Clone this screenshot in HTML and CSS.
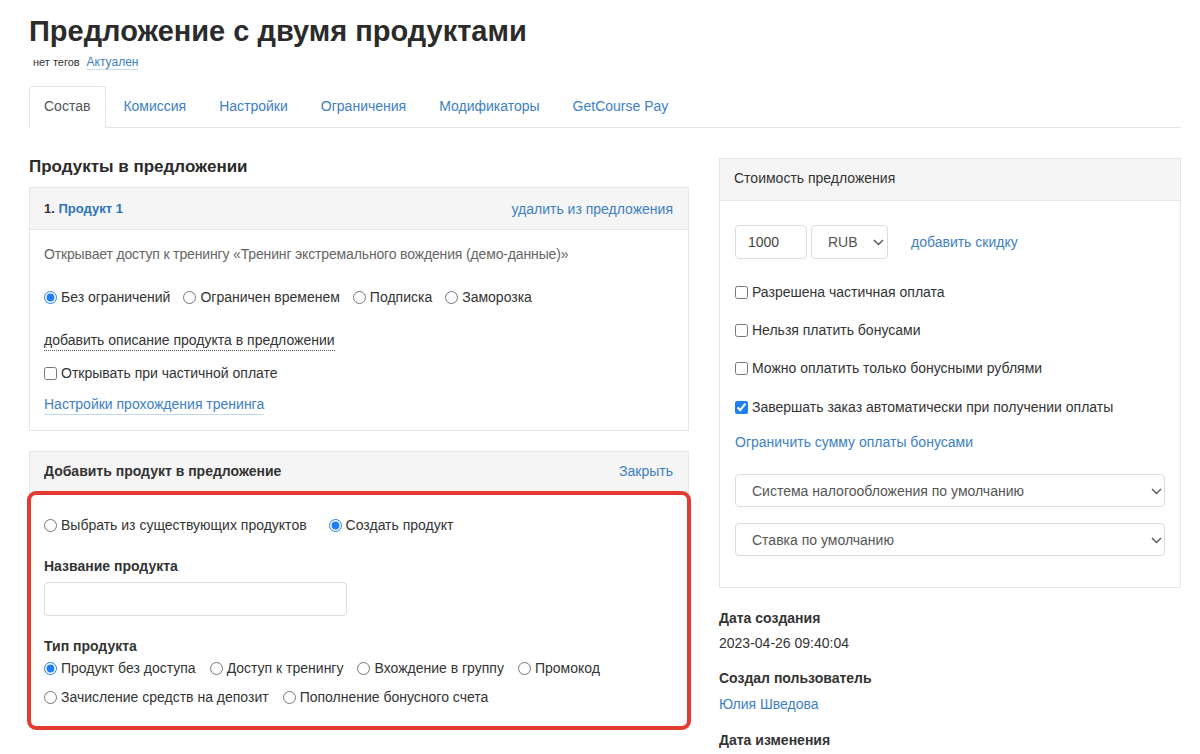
FILE: index.html
```html
<!DOCTYPE html>
<html lang="ru">
<head>
    <meta charset="UTF-8">
    <title>Предложение с двумя продуктами</title>
    <link rel="stylesheet" href="styles.css">
</head>
<body>
    <div class="page">
        <h1 class="title">Предложение с двумя продуктами</h1>
        <div class="meta">
            <span class="tags">нет тегов</span>
            <a href="#" class="status">Актуален</a>
        </div>

        <!-- Tabs -->
        <ul class="tabs">
            <li class="tab active">Состав</li>
            <li class="tab"><a href="#">Комиссия</a></li>
            <li class="tab"><a href="#">Настройки</a></li>
            <li class="tab"><a href="#">Ограничения</a></li>
            <li class="tab"><a href="#">Модификаторы</a></li>
            <li class="tab"><a href="#">GetCourse Pay</a></li>
        </ul>

        <div class="layout">
            <!-- Products -->
            <div class="main">
                <h3 class="section-title">Продукты в предложении</h3>

                <div class="panel">
                    <div class="panel-head">
                        <span class="product-name">1. <a href="#">Продукт 1</a></span>
                        <a href="#" class="link">удалить из предложения</a>
                    </div>
                    <div class="panel-body product-body">
                        <p class="muted">Открывает доступ к тренингу «Тренинг экстремального вождения (демо-данные)»</p>
                        <div class="radio-row">
                            <label class="opt"><input type="radio" name="limit" checked> Без ограничений</label>
                            <label class="opt"><input type="radio" name="limit"> Ограничен временем</label>
                            <label class="opt"><input type="radio" name="limit"> Подписка</label>
                            <label class="opt"><input type="radio" name="limit"> Заморозка</label>
                        </div>
                        <div><a href="#" class="dotted">добавить описание продукта в предложении</a></div>
                        <label class="check first-check"><input type="checkbox"> Открывать при частичной оплате</label>
                        <div><a href="#" class="underlined">Настройки прохождения тренинга</a></div>
                    </div>
                </div>

                <div class="panel">
                    <div class="panel-head raised">
                        <span class="head-title">Добавить продукт в предложение</span>
                        <a href="#" class="link">Закрыть</a>
                    </div>
                    <div class="panel-body add-body">
                        <div class="radio-row wide">
                            <label class="opt"><input type="radio" name="mode"> Выбрать из существующих продуктов</label>
                            <label class="opt"><input type="radio" name="mode" checked> Создать продукт</label>
                        </div>
                        <div class="field-label name-label">Название продукта</div>
                        <input type="text" class="text-input name-input">
                        <div class="field-label type-label">Тип продукта</div>
                        <div class="radio-row type-row">
                            <label class="opt"><input type="radio" name="type" checked> Продукт без доступа</label>
                            <label class="opt"><input type="radio" name="type"> Доступ к тренингу</label>
                            <label class="opt"><input type="radio" name="type"> Вхождение в группу</label>
                            <label class="opt"><input type="radio" name="type"> Промокод</label>
                        </div>
                        <div class="radio-row type-row second">
                            <label class="opt"><input type="radio" name="type"> Зачисление средств на депозит</label>
                            <label class="opt"><input type="radio" name="type"> Пополнение бонусного счета</label>
                        </div>
                    </div>
                </div>
            </div>

            <!-- Price -->
            <aside class="side">
                <div class="panel">
                    <div class="panel-head raised">Стоимость предложения</div>
                    <div class="panel-body price-body">
                        <div class="price-row">
                            <input type="text" class="text-input price-input" value="1000">
                            <div class="select-wrap currency">
                                <select class="select"><option>RUB</option></select>
                                <svg class="chevron" width="11" height="7" viewBox="0 0 11 7"><polyline points="1,1 5.5,5.5 10,1" fill="none" stroke="#555" stroke-width="1.4"/></svg>
                            </div>
                            <a href="#" class="link discount">добавить скидку</a>
                        </div>
                        <label class="check price-check"><input type="checkbox"> Разрешена частичная оплата</label>
                        <label class="check price-check"><input type="checkbox"> Нельзя платить бонусами</label>
                        <label class="check price-check"><input type="checkbox"> Можно оплатить только бонусными рублями</label>
                        <label class="check price-check"><input type="checkbox" checked> Завершать заказ автоматически при получении оплаты</label>
                        <div class="bonus-limit"><a href="#" class="link">Ограничить сумму оплаты бонусами</a></div>
                        <div class="select-wrap full tax">
                            <select class="select"><option>Система налогообложения по умолчанию</option></select>
                            <svg class="chevron" width="11" height="7" viewBox="0 0 11 7"><polyline points="1,1 5.5,5.5 10,1" fill="none" stroke="#555" stroke-width="1.4"/></svg>
                        </div>
                        <div class="select-wrap full rate">
                            <select class="select"><option>Ставка по умолчанию</option></select>
                            <svg class="chevron" width="11" height="7" viewBox="0 0 11 7"><polyline points="1,1 5.5,5.5 10,1" fill="none" stroke="#555" stroke-width="1.4"/></svg>
                        </div>
                    </div>
                </div>

                <div class="info">
                    <div class="info-label">Дата создания</div>
                    <div class="info-value">2023-04-26 09:40:04</div>
                    <div class="info-label">Создал пользователь</div>
                    <div class="info-value user"><a href="#" class="link">Юлия Шведова</a></div>
                    <div class="info-label last">Дата изменения</div>
                </div>
            </aside>
        </div>
    </div>
</body>
</html>
```

FILE: styles.css
```css
/* General */
body {
    margin: 0;
    font-family: 'Liberation Sans', Arial, sans-serif;
    font-size: 14px;
    color: #333;
    background: #fff;
}

a {
    color: #3d80c3;
    text-decoration: none;
}

.page {
    padding: 0 19px 0 29px;
}

.title {
    margin: 14px 0 0;
    font-size: 29px;
    line-height: 34px;
    font-weight: bold;
    color: #2b2b2b;
}

.meta {
    margin-top: 5px;
    margin-left: 4px;
    line-height: 16px;
}

.tags {
    font-size: 11px;
    color: #333;
    margin-right: 3px;
}

.status {
    font-size: 12px;
    border-bottom: 1px solid #c9dcef;
}

/* Tabs */
.tabs {
    list-style: none;
    margin: 16px 0 0;
    padding: 0;
    display: flex;
    border-bottom: 1px solid #e4e4e4;
}

.tab {
    padding: 9px 15px 11px 16px;
    line-height: 20px;
    border: 1px solid transparent;
    border-radius: 4px 4px 0 0;
    margin-bottom: -1px;
}

.tab.active {
    padding: 9px 15px 11px 14px;
    color: #555;
    border-color: #e4e4e4;
    border-bottom-color: #fff;
    background: #fff;
}

.layout {
    display: flex;
    gap: 30px;
    margin-top: 30px;
}

.main {
    width: 660px;
}

.side {
    width: 462px;
}

.section-title {
    margin: -1px 0 10px;
    font-size: 17px;
    line-height: 20px;
    font-weight: bold;
    color: #2b2b2b;
}

/* Panels */
.panel {
    border: 1px solid #e6e6e6;
    margin-bottom: 20px;
}

.panel-head {
    display: flex;
    justify-content: space-between;
    align-items: center;
    height: 41px;
    padding: 0 15px 0 14px;
    background: #f5f5f5;
    border-bottom: 1px solid #e6e6e6;
    color: #333;
}

.panel-head.raised {
    height: 38px;
    padding-bottom: 3px;
}

.product-name {
    font-weight: bold;
    font-size: 13px;
}

.head-title {
    font-weight: bold;
    font-size: 14px;
}

.product-name a {
    color: #2c74ba;
}

.panel-body {
    padding: 14px 14px;
}

.product-body {
    padding-bottom: 15px;
}

.muted {
    margin: 0;
    line-height: 20px;
    color: #666;
    letter-spacing: -0.15px;
}

.radio-row {
    display: flex;
    gap: 13px;
    line-height: 20px;
}

.product-body .radio-row {
    margin-top: 23px;
}

.opt {
    display: flex;
    align-items: center;
}

.opt input, .check input {
    width: 13px;
    height: 13px;
    margin: 0 4px 0 0;
    accent-color: #1f7ef3;
}

.dotted {
    display: inline-block;
    margin-top: 24px;
    line-height: 19px;
    color: #333;
    border-bottom: 1px dotted #555;
}

.check {
    display: flex;
    align-items: center;
    line-height: 20px;
}

.first-check {
    margin-top: 12px;
}

.underlined {
    display: inline-block;
    margin-top: 12px;
    line-height: 19px;
    border-bottom: 1px solid #c3d8ee;
}

/* Add product block */
.add-body {
    padding: 21px 14px 20px;
    border-radius: 6px;
    outline: 4px solid #e43b30;
    outline-offset: -1px;
}

.radio-row.wide {
    gap: 22px;
}

.field-label {
    font-weight: bold;
    font-size: 14px;
    line-height: 20px;
}

.name-label {
    margin-top: 21px;
}

.text-input {
    box-sizing: border-box;
    height: 34px;
    border: 1px solid #dcdcdc;
    border-radius: 4px;
    padding: 0 12px;
    font-family: inherit;
    font-size: 14px;
    color: #444;
}

.name-input {
    display: block;
    width: 303px;
    margin-top: 6px;
}

.type-label {
    margin-top: 20px;
}

.type-row {
    margin-top: 2px;
    gap: 14px;
}

.type-row.second {
    margin-top: 9px;
}

/* Price block */
.price-body {
    padding: 24px 15px 31px;
}

.price-row {
    display: flex;
    align-items: center;
}

.price-input {
    width: 72px;
}

.select-wrap {
    position: relative;
}

.select {
    appearance: none;
    box-sizing: border-box;
    height: 34px;
    width: 100%;
    border: 1px solid #dcdcdc;
    border-radius: 4px;
    background: #fff;
    padding: 0 16px;
    font-family: inherit;
    font-size: 14px;
    color: #555;
}

.chevron {
    position: absolute;
    right: 4px;
    top: 14px;
}

.currency {
    width: 77px;
    margin-left: 4px;
}

.discount {
    margin-left: 23px;
}

.price-check {
    margin-top: 18px;
}

.price-check:first-of-type {
    margin-top: 23px;
}

.price-check:nth-of-type(4) {
    margin-top: 19px;
}

.bonus-limit {
    margin-top: 15px;
    line-height: 20px;
}

.full .select {
    height: 33px;
}

.full .chevron {
    right: 3px;
}

.tax {
    margin-top: 22px;
}

.rate {
    margin-top: 16px;
}

/* Info */
.info-label {
    font-weight: bold;
    line-height: 20px;
    margin-top: 15px;
}

.info-label:first-child {
    margin-top: 0;
}

.info-label.last {
    margin-top: 16px;
}

.info-value {
    line-height: 20px;
    margin-top: 5px;
}

.info-value.user {
    margin-top: 6px;
}
```
